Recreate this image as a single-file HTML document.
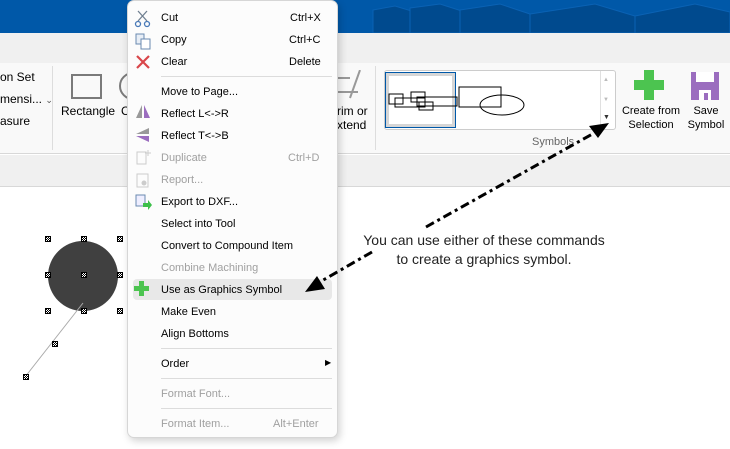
<!DOCTYPE html>
<html><head><meta charset="utf-8"><style>
*{margin:0;padding:0;box-sizing:border-box}
body{width:730px;height:449px;overflow:hidden;position:relative;background:#fff;font-family:"Segoe UI","Liberation Sans",sans-serif;font-size:11px;color:#000}
.a{position:absolute}
.mi{position:absolute;left:161px;font-size:11px;white-space:nowrap;margin-top:2px}
.sc{position:absolute;right:16px;font-size:11px;margin-top:2px}
.dis{color:#a0a0a0}
.sep{position:absolute;left:161px;right:6px;height:1px;background:#dcdcdc}
.h{position:absolute;width:6px;height:6px;border:1px solid #000;background-image:repeating-conic-gradient(#fff 0 25%,#000 0 50%);background-size:2px 2px}
</style></head><body>
<div class="a" style="left:0;top:0;width:730px;height:33px;background:#0058a8"></div>
<svg class="a" style="left:365px;top:0" width="365" height="33">
<g fill="#004a8e" stroke="#0a62b4" stroke-width="1">
<polygon points="8,10 30,6 50,12 50,33 8,33"/><polygon points="45,8 75,4 100,12 100,33 45,33"/>
<polygon points="95,10 135,4 165,14 165,33 95,33"/><polygon points="165,14 230,4 270,16 270,33 165,33"/>
<polygon points="270,16 330,4 365,12 365,33 270,33"/></g></svg>
<div class="a" style="left:0;top:33px;width:730px;height:30px;background:#f0f0f0"></div>
<div class="a" style="left:0;top:63px;width:730px;height:91px;background:#f9f9f9;border-bottom:1px solid #d8d8d8"></div>
<div class="a" style="left:0;top:155px;width:730px;height:32px;background:#f0f0f0;border-bottom:1px solid #d8d8d8"></div>
<div class="a" style="left:0;top:70px;font-size:12px">on Set</div>
<div class="a" style="left:0;top:92px;font-size:12px">mensi... <span style="font-size:9px;color:#555">&#8964;</span></div>
<div class="a" style="left:0;top:114px;font-size:12px">asure</div>
<div class="a" style="left:52px;top:66px;width:1px;height:84px;background:#ddd"></div>
<div class="a" style="left:71px;top:74px;width:31px;height:25px;border:2px solid #7a7a7a"></div>
<div class="a" style="left:61px;top:104px;font-size:12px">Rectangle</div>
<div class="a" style="left:119px;top:72px;width:28px;height:28px;border:2px solid #7a7a7a;border-radius:50%"></div>
<div class="a" style="left:121px;top:104px;font-size:12px">C</div>
<svg class="a" style="left:330px;top:70px" width="40" height="30"><path d="M8 8H20M8 22H28M30 0L20 28" stroke="#999" stroke-width="2" fill="none"/></svg>
<div class="a" style="left:337px;top:104px;font-size:12px;line-height:14px">rim or<br>xtend</div>
<div class="a" style="left:375px;top:66px;width:1px;height:84px;background:#ddd"></div>
<div class="a" style="left:384px;top:70px;width:232px;height:60px;background:#fff;border:1px solid #ccc;border-radius:3px"></div>
<div class="a" style="left:385px;top:72px;width:71px;height:56px;border:1px solid #0058a8;background:#fff;box-shadow:inset 0 0 0 3px #d6d6d6"></div>
<svg class="a" style="left:385px;top:72px" width="160" height="56">
<g fill="none" stroke="#000" stroke-width="1"><rect x="4" y="22" width="14" height="10"/><rect x="10" y="26" width="30" height="9"/><rect x="26" y="20" width="14" height="10"/><rect x="32" y="25" width="40" height="9"/><rect x="34" y="30" width="14" height="8"/>
<rect x="74" y="15" width="42" height="20"/><ellipse cx="117" cy="33" rx="22" ry="10"/></g></svg>
<div class="a" style="left:600px;top:71px;width:15px;height:58px;border-left:1px solid #e0e0e0"></div>
<div class="a" style="left:603px;top:77px;font-size:6px;color:#bbb">▲</div>
<div class="a" style="left:603px;top:97px;font-size:6px;color:#bbb">▼</div>
<div class="a" style="left:603px;top:114px;font-size:7px;color:#333">▼</div>
<div class="a" style="left:532px;top:136px;font-size:11px;color:#666">Symbols</div>
<svg class="a" style="left:634px;top:70px" width="30" height="30"><path d="M10 0H20V10H30V20H20V30H10V20H0V10H10Z" fill="#4cc450"/></svg>
<div class="a" style="left:619px;top:104px;font-size:11px;line-height:14px;text-align:center;width:64px">Create from<br>Selection</div>
<svg class="a" style="left:691px;top:72px" width="28" height="28"><path d="M0 0H28V28H0Z" fill="#9b6dbf"/><rect x="5" y="0" width="18" height="10" fill="#fff"/><rect x="8" y="18" width="12" height="10" fill="#fff"/><rect x="13" y="21" width="4" height="7" fill="#9b6dbf"/></svg>
<div class="a" style="left:686px;top:104px;font-size:11px;line-height:14px;text-align:center;width:40px">Save<br>Symbol</div>
<!-- canvas -->
<div class="a" style="left:48px;top:241px;width:70px;height:70px;border-radius:50%;background:#404040"></div>
<svg class="a" style="left:0;top:300px" width="100" height="90"><line x1="83" y1="3" x2="25" y2="77" stroke="#aaa" stroke-width="1"/></svg>
<div class="h" style="left:45px;top:236px"></div><div class="h" style="left:81px;top:236px"></div><div class="h" style="left:117px;top:236px"></div>
<div class="h" style="left:45px;top:272px"></div><div class="h" style="left:81px;top:272px"></div><div class="h" style="left:117px;top:272px"></div>
<div class="h" style="left:45px;top:308px"></div><div class="h" style="left:81px;top:308px"></div><div class="h" style="left:117px;top:308px"></div>
<div class="h" style="left:52px;top:341px"></div><div class="h" style="left:23px;top:374px"></div>
<div class="a" style="left:356px;top:231px;font-size:14px;line-height:19px;color:#222;text-align:center;width:256px">You can use either of these commands<br>to create a graphics symbol.</div>
<!-- menu -->
<div class="a" style="left:127px;top:0;width:211px;height:438px;background:#fcfcfc;border:1px solid #d6d6d6;border-radius:7px;box-shadow:2px 3px 8px rgba(0,0,0,.18)">
<div class="a" style="left:5px;top:278px;width:199px;height:21px;background:#e8e8e8;border-radius:4px"></div>
</div>
<svg class="a" style="left:0;top:0" width="730" height="449">
<g stroke="#000" stroke-width="3" stroke-dasharray="9,4,3,4" fill="none"><line x1="426" y1="227" x2="596" y2="132"/><line x1="372" y1="252" x2="318" y2="283"/></g>
<polygon points="609,123 589,126 598,138" fill="#000"/><polygon points="305,292 317,276 325,289" fill="#000"/>
</svg>
<svg class="a" style="left:134px;top:10px" width="20" height="210">
<g stroke="#6f7f90" stroke-width="1.3" fill="none"><path d="M4 1L13 11M13 1L4 11"/><circle cx="4" cy="14" r="2.5" stroke="#4a7ab8"/><circle cx="13" cy="14" r="2.5" stroke="#4a7ab8"/></g>
<rect x="2" y="24" width="8" height="10" fill="#e8eef6" stroke="#6a8ab0"/><rect x="7" y="29" width="9" height="10" fill="#fff" stroke="#6a8ab0"/>
<path d="M3 46L15 58M15 46L3 58" stroke="#d9464a" stroke-width="2.2"/>
<polygon points="8,95 8,108 2,108" fill="#999"/><polygon points="10,95 10,108 16,108" fill="#9b6dbf"/>
<polygon points="15,118 15,124 2,124" fill="#999"/><polygon points="15,126 15,132 2,126" fill="#9b6dbf"/>
<rect x="3" y="142" width="9" height="12" fill="none" stroke="#ccc"/><path d="M14 140V146M11 143H17" stroke="#ccc"/>
<rect x="3" y="164" width="11" height="13" fill="none" stroke="#ccc"/><circle cx="10" cy="173" r="2.5" fill="#ccc"/>
<rect x="2" y="185" width="9" height="11" fill="#eef" stroke="#6a8ab0"/><path d="M9 193H14V190L18 195L14 200V197H9Z" fill="#3cbf4a"/>
</svg>
<svg class="a" style="left:134px;top:281px" width="16" height="16"><path d="M5 0H10V5H15V10H10V15H5V10H0V5H5Z" fill="#4cc450"/></svg>
<div class="mi" style="top:10px">Cut</div><div class="sc" style="top:10px;left:290px">Ctrl+X</div>
<div class="mi" style="top:32px">Copy</div><div class="sc" style="top:32px;left:289px">Ctrl+C</div>
<div class="mi" style="top:54px">Clear</div><div class="sc" style="top:54px;left:289px">Delete</div>
<div class="sep" style="top:76px;left:161px;width:171px"></div>
<div class="mi" style="top:84px">Move to Page...</div>
<div class="mi" style="top:106px">Reflect L&lt;-&gt;R</div>
<div class="mi" style="top:128px">Reflect T&lt;-&gt;B</div>
<div class="mi dis" style="top:150px">Duplicate</div><div class="sc dis" style="top:150px;left:288px">Ctrl+D</div>
<div class="mi dis" style="top:172px">Report...</div>
<div class="mi" style="top:194px">Export to DXF...</div>
<div class="mi" style="top:216px">Select into Tool</div>
<div class="mi" style="top:238px">Convert to Compound Item</div>
<div class="mi dis" style="top:260px">Combine Machining</div>
<div class="mi" style="top:282px">Use as Graphics Symbol</div>
<div class="mi" style="top:304px">Make Even</div>
<div class="mi" style="top:326px">Align Bottoms</div>
<div class="sep" style="top:348px;width:171px"></div>
<div class="mi" style="top:356px">Order</div><div class="a" style="left:325px;top:358px;font-size:8px">▶</div>
<div class="sep" style="top:378px;width:171px"></div>
<div class="mi dis" style="top:386px">Format Font...</div>
<div class="sep" style="top:408px;width:171px"></div>
<div class="mi dis" style="top:416px">Format Item...</div><div class="sc dis" style="top:416px;left:273px">Alt+Enter</div>
</body></html>
